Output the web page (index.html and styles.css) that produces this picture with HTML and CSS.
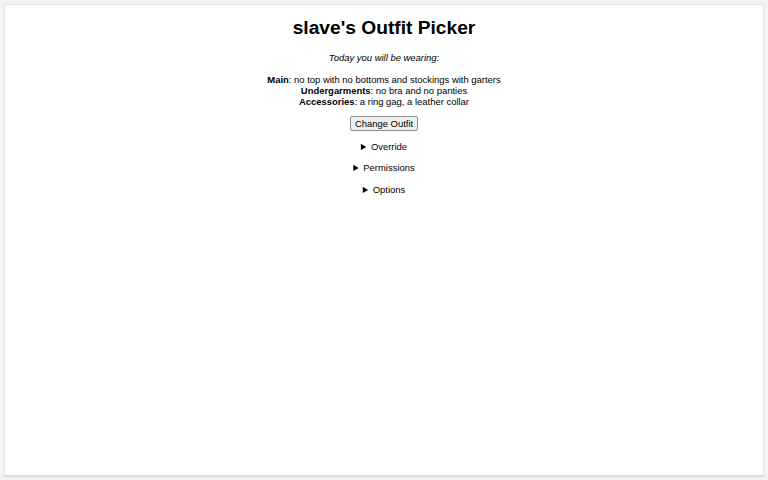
FILE: index.html
```html
<!DOCTYPE html>
<html lang="en">
<head>
<meta charset="utf-8">
<title>slave's Outfit Picker</title>
<link rel="stylesheet" href="styles.css">
</head>
<body>
<main class="card">
  <h1 class="title">slave's Outfit Picker</h1>
  <p class="lead">Today you will be wearing:</p>
  <p class="outfit">
    <b>Main</b>: no top with no bottoms and stockings with garters<br>
    <b>Undergarments</b>: no bra and no panties<br>
    <b>Accessories</b>: a ring gag, a leather collar
  </p>
  <div class="actions"><button class="btn" type="button">Change Outfit</button></div>
  <details class="panel"><summary>Override</summary></details>
  <details class="panel"><summary>Permissions</summary></details>
  <details class="panel"><summary>Options</summary></details>
</main>
</body>
</html>
```
FILE: styles.css
```css
html, body {
  height: 100%;
}

body {
  margin: 0;
  padding: 4px;
  box-sizing: border-box;
  background: #f4f4f4;
  font-family: "Liberation Sans", Arial, sans-serif;
  font-size: 9.45px;
  line-height: 11px;
  color: #000;
}

.card {
  box-sizing: border-box;
  height: 100%;
  background: #fff;
  border: 1px solid #e2e2e2;
  box-shadow: 0 1px 1px rgba(0, 0, 0, 0.12);
  padding: 0 10px;
  text-align: center;
  display: flow-root;
}

.title {
  font-size: 19.2px;
  line-height: 22px;
  font-weight: bold;
  margin: 12px 0 12.5px;
}

.lead {
  font-style: italic;
  margin: 0 0 11px;
}

.outfit {
  margin: 0 0 9.5px;
}

.actions {
  margin: 0 0 9.5px;
  line-height: 0;
}

.btn {
  font-family: inherit;
  font-size: 9.45px;
  color: #000;
  background: #efefef;
  border: 1px solid #8f8f8f;
  border-radius: 2px;
  padding: 2px 4px;
  line-height: 9px;
  height: 15px;
  box-sizing: border-box;
}

.panel {
  margin: 0 0 10.5px;
}
```
